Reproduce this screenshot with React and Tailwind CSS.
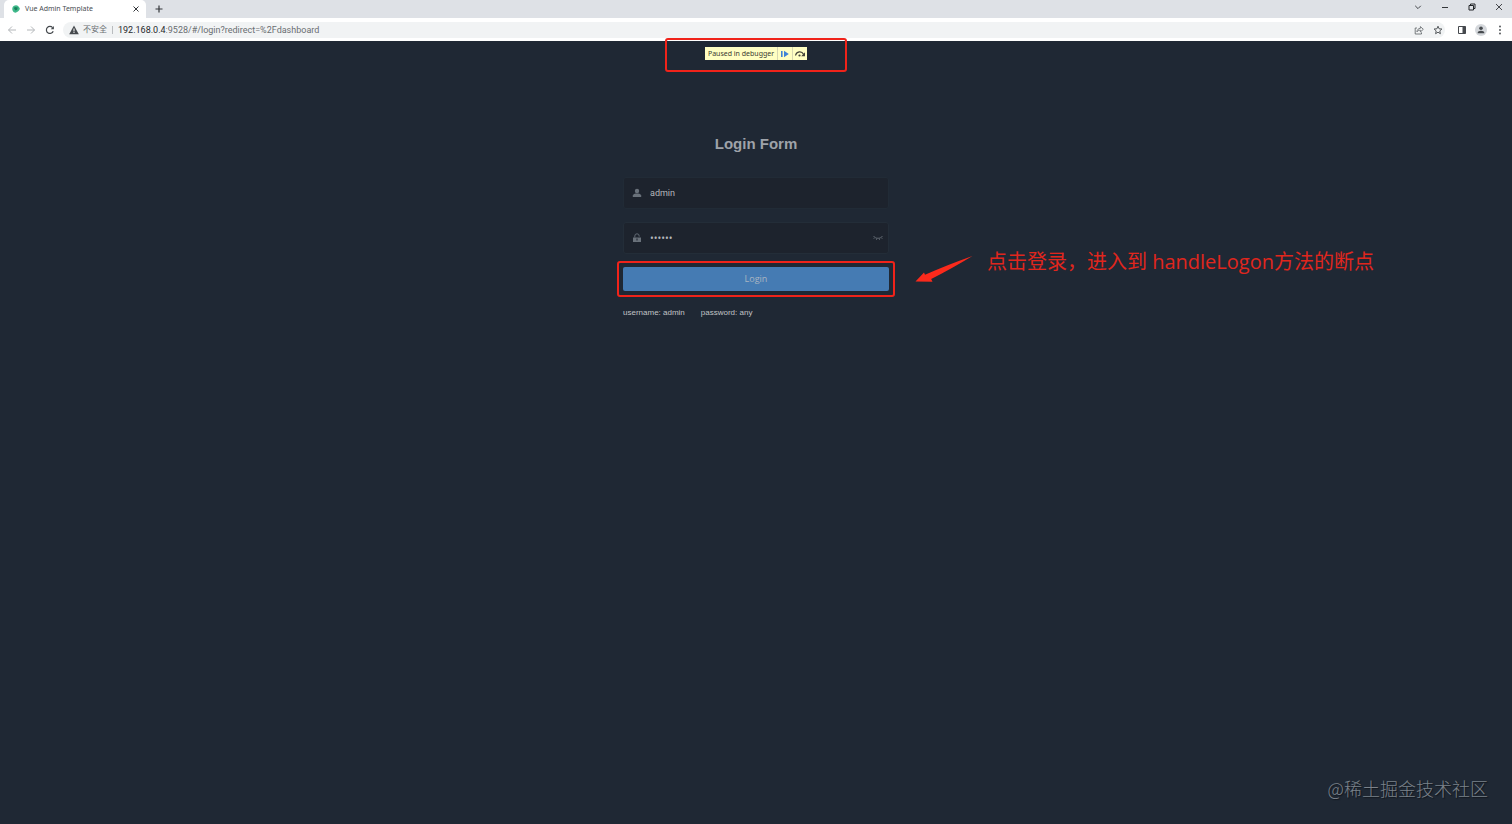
import React, { useState } from 'react';

const TriangleAlert = () => (
  <svg viewBox="0 0 10 10" className="h-[10px] w-[10px] shrink-0">
    <path d="M5 .6 9.8 9.2H.2z" fill="#45494d" />
    <path d="M4.5 3.6h1v2.8h-1zM4.5 7.1h1v1h-1z" fill="#fff" />
  </svg>
);

const BrowserTabs = () => (
  <div className="flex h-[18px] items-stretch bg-[#dee1e6] pl-1">
    <div className="flex w-[142px] items-center rounded-t-[5px] bg-white pr-1.5 pl-2">
      <svg viewBox="0 0 10 10" className="h-2 w-2 shrink-0">
        <path d="M2 1.2C4 .2 6.4.2 7.6 1.2L9.8 4.2C9.9 5.6 8.8 7 7.4 8L4.6 9.6C2.6 9.6 1 8.4.5 6.4.1 4.4.5 2.2 2 1.2z" fill="#3fb88a" />
        <path d="M3.2 2.4 7.2 3 6.4 6 4.6 7 2.6 4.6z" fill="#16805a" />
      </svg>
      <span className="ml-[5px] flex-1 font-['Noto_Sans',sans-serif] text-[7px] leading-3 text-[#4a4e52]">
        Vue Admin Template
      </span>
      <button type="button" aria-label="Close tab">
        <svg viewBox="0 0 8 8" className="h-2 w-2" stroke="#33363a">
          <path d="M1.5 1.5l5 5M6.5 1.5l-5 5" />
        </svg>
      </button>
    </div>
    <button type="button" aria-label="New tab" className="ml-2">
      <svg viewBox="0 0 10 10" className="h-[10px] w-[10px]" stroke="#33363a" strokeWidth="1.2">
        <path d="M5 1.5v7M1.5 5h7" />
      </svg>
    </button>

    {/* Window controls */}
    <div className="ml-auto flex items-center gap-[17px] pr-2 pb-1">
      <button type="button" aria-label="Search tabs">
        <svg viewBox="0 0 10 10" className="h-[10px] w-[10px]" fill="none" stroke="#44474b">
          <path d="M2.2 3.8 5 6.6l2.8-2.8" />
        </svg>
      </button>
      <button type="button" aria-label="Minimize">
        <svg viewBox="0 0 10 10" className="h-[10px] w-[10px]" stroke="#33363a">
          <path d="M2 5.5h6" />
        </svg>
      </button>
      <button type="button" aria-label="Restore">
        <svg viewBox="0 0 10 10" className="h-[10px] w-[10px]" fill="none" stroke="#222528">
          <path d="M2 3.5h4.5V8H2zM3.5 3.5V2H8v4.5H6.5" />
        </svg>
      </button>
      <button type="button" aria-label="Close window">
        <svg viewBox="0 0 10 10" className="h-[10px] w-[10px]" stroke="#33363a" strokeWidth=".9">
          <path d="M2 2l6 6M8 2l-6 6" />
        </svg>
      </button>
    </div>
  </div>
);

const AddressBar = () => (
  <div className="flex h-[23px] items-center bg-white pr-[7px] pl-[7px]">
    <div className="flex gap-[9px] pr-2">
      <button type="button" aria-label="Back">
        <svg viewBox="0 0 10 10" className="h-[10px] w-[10px]" fill="none" stroke="#b4b7ba">
          <path d="M9 5H1.5M5 1.5 1.5 5 5 8.5" />
        </svg>
      </button>
      <button type="button" aria-label="Forward">
        <svg viewBox="0 0 10 10" className="h-[10px] w-[10px]" fill="none" stroke="#b4b7ba">
          <path d="M1 5h7.5M5 1.5 8.5 5 5 8.5" />
        </svg>
      </button>
      <button type="button" aria-label="Reload">
        <svg viewBox="0 0 10 10" className="h-[10px] w-[10px]" fill="none" stroke="#45494d" strokeWidth="1.2">
          <path d="M8.2 6.2A3.5 3.5 0 1 1 7.6 2.7" />
          <path d="M8.9 1v3.2H5.7z" fill="#45494d" stroke="none" />
        </svg>
      </button>
    </div>
    <div className="flex h-4 flex-1 items-center rounded-full bg-[#f1f3f4] pr-0.5 pl-1.5 font-['Roboto','Noto_Sans_CJK_SC',sans-serif] text-[9px] leading-4 text-[#6a6e72]">
      <TriangleAlert />
      <span className="ml-1 text-[8px] whitespace-nowrap">不安全</span>
      <span className="mx-[5px] h-2 w-px bg-[#b9bcbf]" />
      <p className="flex-1 whitespace-nowrap">
        <span className="text-[#26292c]">192.168.0.4</span>:9528/#/login?redirect=%2Fdashboard
      </p>
      <button type="button" aria-label="Share">
        <svg viewBox="0 0 10 10" className="h-[10px] w-[10px]" fill="none" stroke="#5b5f63" strokeWidth=".8">
          <path d="M3 3H1.2v6h6.3V7.4M2.9 6.8C3.2 4.6 4.5 3.4 6.4 3.3V1.6L9.3 4.3 6.4 6.9V5.2C4.9 5.2 3.8 5.7 2.9 6.8z" />
        </svg>
      </button>
      <button type="button" aria-label="Bookmark" className="ml-[9px]">
        <svg viewBox="0 0 10 10" className="h-[10px] w-[10px]" fill="none" stroke="#45494d" strokeWidth=".9">
          <path d="M5 1.2 6.1 3.8 8.9 4 6.8 5.9 7.4 8.7 5 7.2 2.6 8.7 3.2 5.9 1.1 4 3.9 3.8z" />
        </svg>
      </button>
    </div>
    <div className="flex items-center gap-2 pl-3">
      <button type="button" aria-label="Side panel">
        <svg viewBox="0 0 10 10" className="h-[10px] w-[10px]">
          <path d="M1.500 1.500h7v7h-7z" fill="none" stroke="#45494d" />
          <path d="M5.500 1.500h3v7h-3z" fill="#45494d" />
        </svg>
      </button>
      <button type="button" aria-label="Profile">
        <svg viewBox="0 0 12 12" className="h-3 w-3">
          <circle cx="6" cy="6" r="6" fill="#d5d8dc" />
          <circle cx="6" cy="4.2" r="1.8" fill="#45494d" />
          <path d="M2.6 9.2c0-3.2 6.8-3.2 6.8 0z" fill="#45494d" />
        </svg>
      </button>
      <button type="button" aria-label="Menu">
        <svg viewBox="0 0 10 10" className="h-[10px] w-[10px]" fill="#45494d">
          <circle cx="5" cy="1.5" r=".9" />
          <circle cx="5" cy="5" r=".9" />
          <circle cx="5" cy="8.5" r=".9" />
        </svg>
      </button>
    </div>
  </div>
);

const DebuggerBanner = () => (
  <div className="relative mt-1.5 flex h-[13px] items-stretch bg-[#ffffc2] font-['Noto_Sans',sans-serif] text-[7px] text-[#3a3a30]">
    <span className="px-[3px] leading-[13px]">Paused in debugger</span>
    <button type="button" aria-label="Resume" className="flex w-[15px] items-center justify-center border-l border-[#d8d8b0]">
      <svg viewBox="0 0 10 8" className="h-2 w-[10px]" fill="#3f83d6">
        <path d="M1 1h1.6v6H1zM4 .8 8.8 4 4 7.2z" />
      </svg>
    </button>
    <button type="button" aria-label="Step over" className="flex w-[15px] items-center justify-center border-l border-[#d8d8b0]">
      <svg viewBox="0 0 12 8" className="h-2 w-3">
        <path d="M1.5 5.5C2.4 1.2 7.8.8 9.5 4.2" fill="none" stroke="#45453a" strokeWidth="1.2" />
        <path d="M11 2.2v4H7.2z" fill="#45453a" />
        <circle cx="5.5" cy="5.5" r="1.1" fill="#45453a" />
      </svg>
    </button>
    {/* Highlight frame */}
    <div className="pointer-events-none absolute -inset-x-10 -top-[9px] -bottom-3 rounded-[3px] border-2 border-[#f0231a]" />
  </div>
);

const App = () => {
  const [username, setUsername] = useState('admin');
  const [password, setPassword] = useState('123456');
  const [showPassword, setShowPassword] = useState(false);

  return (
    <div className="flex min-h-screen flex-col bg-[#1f2834]">
      <header>
        <BrowserTabs />
        <AddressBar />
      </header>

      <main className="relative flex flex-1 flex-col items-center overflow-x-clip">
        <DebuggerBanner />

        <form
          onSubmit={(e) => e.preventDefault()}
          className="mt-[72px] w-full max-w-[266px] font-['Liberation_Sans',sans-serif]"
        >
          <h1 className="text-center text-[15px] leading-6 font-bold text-[#9ea3a9]">Login Form</h1>

          <div className="mt-[21px] flex h-8 items-center rounded-[3px] border border-[#212b36] bg-[#1d232d] px-2">
            <label htmlFor="username" aria-label="Username">
              <svg viewBox="0 0 10 10" className="h-[10px] w-[10px]" fill="#69717a">
                <circle cx="5" cy="3" r="2.2" />
                <path d="M.8 9V7.6C1.2 6.3 2.6 5.7 3.6 5.6h2.8C7.4 5.7 8.8 6.3 9.2 7.6V9z" />
              </svg>
            </label>
            <input
              id="username"
              type="text"
              value={username}
              onChange={(e) => setUsername(e.target.value)}
              className="ml-2 h-5 min-w-0 flex-1 bg-transparent font-['Roboto',sans-serif] text-[9px] leading-5 text-[#b5b8bc] outline-none"
            />
          </div>

          <div className="mt-[13px] flex h-8 items-center rounded-[3px] border border-[#232d38] bg-[#1d232d] pr-[5px] pl-2">
            <label htmlFor="password" aria-label="Password">
              <svg viewBox="0 0 10 10" className="h-[10px] w-[10px]">
                <path d="M2.8 4.5V3A2.2 2.2 0 0 1 7.2 3v.6" fill="none" stroke="#69717a" strokeWidth=".9" />
                <path d="M1 4.5h8V9H1z" fill="#69717a" />
                <path d="M4.5 5.6h1v2h-1z" fill="#1d232d" />
              </svg>
            </label>
            <input
              id="password"
              type={showPassword ? 'text' : 'password'}
              value={password}
              onChange={(e) => setPassword(e.target.value)}
              className="ml-2 h-5 min-w-0 flex-1 bg-transparent font-['Open_Sans',sans-serif] text-[10px] leading-5 text-[#b5b8bc] outline-none"
            />
            <button type="button" aria-label="Toggle password" onClick={() => setShowPassword(!showPassword)}>
              <svg viewBox="0 0 10 6" className="h-1.5 w-[10px]" fill="none" stroke="#69717a" strokeWidth=".8">
                <path d="M.5 1C2.5 4 7.5 4 9.5 1M1.8 2.5.7 3.8M3.8 3.3 3.4 4.9M6.2 3.3 6.6 4.9M8.2 2.5 9.3 3.8" />
              </svg>
            </button>
          </div>

          <div className="relative mt-[13px]">
            <button
              type="submit"
              className="block h-6 w-full rounded-[2px] bg-[#457bb3] font-['Open_Sans',sans-serif] text-[9px] text-[#a9b5c2]"
            >
              Login
            </button>
            <div className="pointer-events-none absolute -inset-1.5 rounded-[3px] border-2 border-[#f0231a]" />
            {/* Callout pointing at the login button */}
            <div className="absolute bottom-2 left-full ml-[26px] flex items-start whitespace-nowrap text-[#e0261d]">
              <svg viewBox="0 0 58 28" className="h-7 w-[58px]" fill="#fa2a1c">
                <path d="M57.5 1Q32 10 10 19.8L9 17.5.5 26.5 17.5 26.8 16.2 24Q36 14 57.5 1z" />
              </svg>
              <span className="ml-[14px] font-['Open_Sans','Noto_Sans_CJK_SC',sans-serif] text-xl leading-[14px]">
                点击登录，进入到 handleLogon方法的断点
              </span>
            </div>
          </div>

          <div className="mt-[17px] flex gap-4 text-[8px] leading-[10px] text-[#c0c3c6]">
            <span>username: admin</span>
            <span>password: any</span>
          </div>
        </form>

        <p className="mt-auto mr-6 mb-[22px] self-end font-['Noto_Sans_CJK_SC',sans-serif] text-lg leading-7 font-light text-[#7b828a] [text-shadow:1px_1px_1px_#11161d]">
          @稀土掘金技术社区
        </p>
      </main>
    </div>
  );
};

export default App;
